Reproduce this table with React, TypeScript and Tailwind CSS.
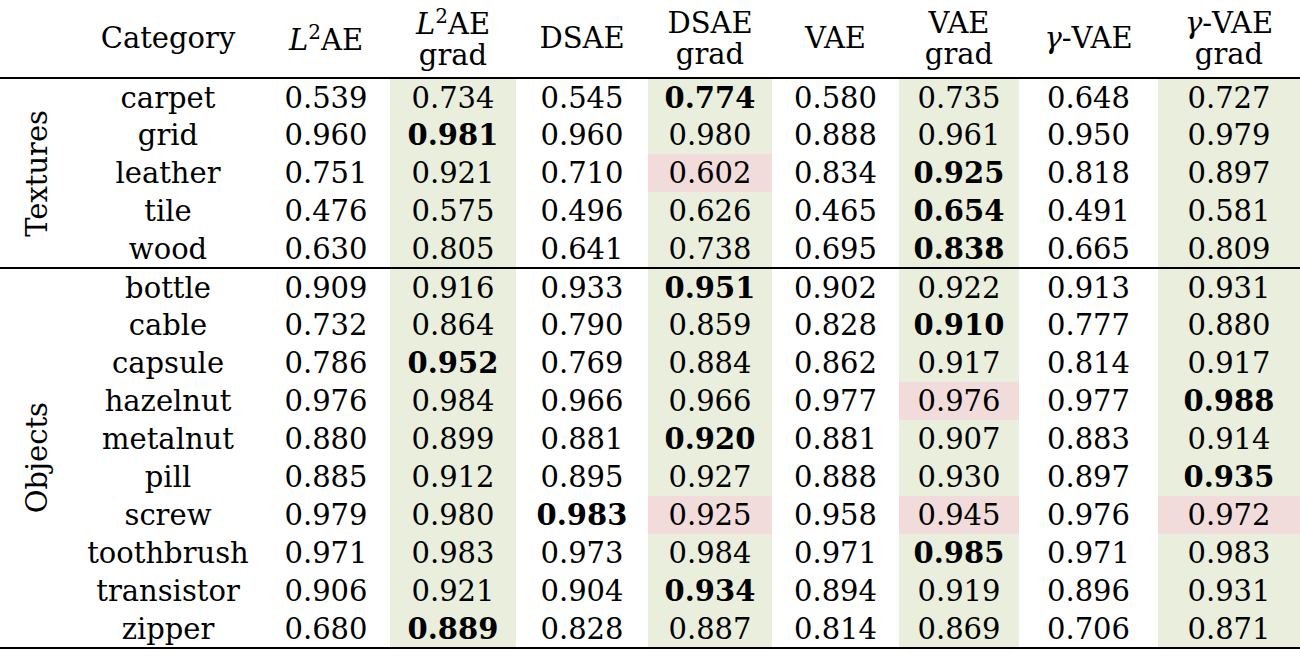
import React from 'react';

// '*' = best score (bold), '!' = gradient version worse than the base model (red cell)
const textures: [string, string[]][] = [
  ['carpet', ['0.539', '0.734', '0.545', '*0.774', '0.580', '0.735', '0.648', '0.727']],
  ['grid', ['0.960', '*0.981', '0.960', '0.980', '0.888', '0.961', '0.950', '0.979']],
  ['leather', ['0.751', '0.921', '0.710', '!0.602', '0.834', '*0.925', '0.818', '0.897']],
  ['tile', ['0.476', '0.575', '0.496', '0.626', '0.465', '*0.654', '0.491', '0.581']],
  ['wood', ['0.630', '0.805', '0.641', '0.738', '0.695', '*0.838', '0.665', '0.809']],
];

const objects: [string, string[]][] = [
  ['bottle', ['0.909', '0.916', '0.933', '*0.951', '0.902', '0.922', '0.913', '0.931']],
  ['cable', ['0.732', '0.864', '0.790', '0.859', '0.828', '*0.910', '0.777', '0.880']],
  ['capsule', ['0.786', '*0.952', '0.769', '0.884', '0.862', '0.917', '0.814', '0.917']],
  ['hazelnut', ['0.976', '0.984', '0.966', '0.966', '0.977', '!0.976', '0.977', '*0.988']],
  ['metalnut', ['0.880', '0.899', '0.881', '*0.920', '0.881', '0.907', '0.883', '0.914']],
  ['pill', ['0.885', '0.912', '0.895', '0.927', '0.888', '0.930', '0.897', '*0.935']],
  ['screw', ['0.979', '0.980', '*0.983', '!0.925', '0.958', '!0.945', '0.976', '!0.972']],
  ['toothbrush', ['0.971', '0.983', '0.973', '0.984', '0.971', '*0.985', '0.971', '0.983']],
  ['transistor', ['0.906', '0.921', '0.904', '*0.934', '0.894', '0.919', '0.896', '0.931']],
  ['zipper', ['0.680', '*0.889', '0.828', '0.887', '0.814', '0.869', '0.706', '0.871']],
];

const colWidths = [74, 188, 128, 126, 132, 124, 127, 120, 139, 142];

function L2() {
  return (
    <>
      <span className="italic">L</span>
      <span className="text-[20px] align-[11px] leading-none">2</span>AE
    </>
  );
}

function Gamma() {
  return <span className="italic">γ</span>;
}

function ValueCell({ raw, idx }: { raw: string; idx: number }) {
  const bold = raw.startsWith('*');
  const red = raw.startsWith('!');
  const value = raw.replace(/^[*!]/, '');
  const grad = idx % 2 === 1;
  return (
    <td className={`p-0 text-center ${red ? 'bg-[#f1dcdb]' : grad ? 'bg-[#e9eedd]' : ''} ${bold ? 'font-bold' : ''}`}>
      {value}
    </td>
  );
}

function Block({ label, rows }: { label: string; rows: [string, string[]][] }) {
  return (
    <>
      {rows.map(([name, vals], r) => (
        <tr key={name} className={`h-[38px] ${r === rows.length - 1 ? 'border-b-2 border-black' : ''}`}>
          {r === 0 && (
            <td rowSpan={rows.length} className="p-0 align-middle">
              <div className="flex items-center justify-center">
                <span className="[writing-mode:vertical-rl] rotate-180 leading-none">{label}</span>
              </div>
            </td>
          )}
          <td className="p-0 text-center">{name}</td>
          {vals.map((v, i) => (
            <ValueCell key={i} raw={v} idx={i} />
          ))}
        </tr>
      ))}
    </>
  );
}

function Head({ children }: { children?: React.ReactNode }) {
  return <th className="p-0 font-normal">{children}</th>;
}

export default function App() {
  return (
    <div className="w-[1300px] h-[657px] bg-white text-black overflow-hidden">
      <table className="table-fixed border-collapse w-[1300px] text-[29px] leading-[36px] font-['DejaVu_Serif',serif]! [&_*]:font-['DejaVu_Serif',serif]!">
        <colgroup>
          {colWidths.map((w, i) => (
            <col key={i} style={{ width: w }} />
          ))}
        </colgroup>
        <thead>
          <tr className="h-[78px] border-b-2 border-black leading-[31px]">
            <Head />
            <Head>Category</Head>
            <Head>
              <L2 />
            </Head>
            <Head>
              <div>
                <L2 />
              </div>
              <div>grad</div>
            </Head>
            <Head>DSAE</Head>
            <Head>
              <div>DSAE</div>
              <div>grad</div>
            </Head>
            <Head>VAE</Head>
            <Head>
              <div>VAE</div>
              <div>grad</div>
            </Head>
            <Head>
              <Gamma />-VAE
            </Head>
            <Head>
              <div>
                <Gamma />-VAE
              </div>
              <div>grad</div>
            </Head>
          </tr>
        </thead>
        <tbody>
          <Block label="Textures" rows={textures} />
          <Block label="Objects" rows={objects} />
        </tbody>
      </table>
    </div>
  );
}
